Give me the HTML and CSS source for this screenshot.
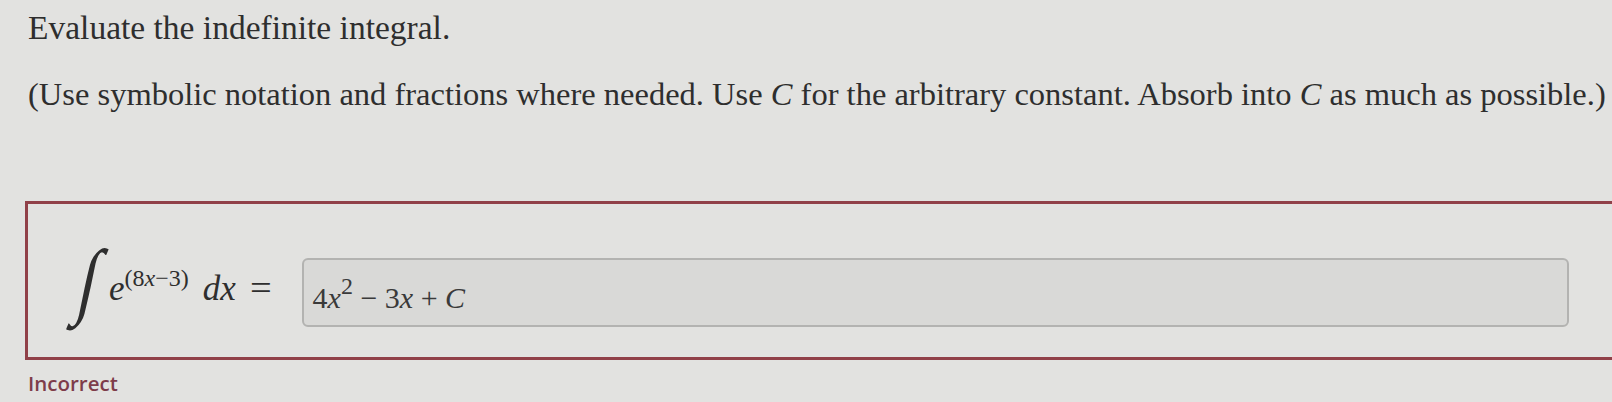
FILE: index.html
```html
<!DOCTYPE html>
<html>
<head>
<meta charset="utf-8">
<link rel="stylesheet" href="styles.css">
</head>
<body>
<div class="page">
  <p class="title">Evaluate the indefinite integral.</p>
  <p class="instr">(Use symbolic notation and fractions where needed. Use <i>C</i> for the arbitrary constant. Absorb into <i>C</i> as much as possible.)</p>
  <div class="answer-box">
    <div class="eq">
      <span class="integral">∫</span>
      <span class="math"><i>e</i><sup class="exp">(8<i>x</i>−3)</sup><i class="dx">dx</i><span class="equals">=</span></span>
      <div class="input"><span>4<i>x</i><sup class="sq">2</sup> − 3<i>x</i> + <i>C</i></span></div>
    </div>
  </div>
  <div class="status">Incorrect</div>
</div>
</body>
</html>
```
FILE: styles.css
```css
html, body {
  margin: 0;
  padding: 0;
  background: #e2e2e0;
}
.page {
  width: 1612px;
  height: 402px;
  overflow: hidden;
  padding: 8px 0 0 28px;
  box-sizing: border-box;
  font-family: "Liberation Serif", "Times New Roman", serif;
  color: #2e2e2e;
}
.title {
  margin: 0;
  font-size: 33.5px;
  line-height: 40px;
  white-space: nowrap;
}
.instr {
  margin: 24px 0 0 0;
  font-size: 32.5px;
  line-height: 44px;
  white-space: nowrap;
}
.answer-box {
  margin: 85px 0 0 -3px;
  width: 1640px;
  height: 159px;
  border: 3px solid #904048;
  border-right: none;
  box-sizing: border-box;
  padding-top: 54px;
}
.eq {
  display: flex;
  align-items: center;
  padding-left: 50px;
}
.integral {
  font-size: 84px;
  line-height: 68px;
  font-style: italic;
  display: inline-block;
  transform: translateY(-13px) skewX(-12deg) scaleX(0.8);
  margin-right: 8px;
}
.math {
  font-size: 35px;
  white-space: nowrap;
  display: inline-block;
  transform: translateY(-6px);
}
.exp {
  font-size: 24px;
  vertical-align: 14px;
  font-style: normal;
}
.dx {
  font-size: 35px;
  margin-left: 14px;
}
.equals {
  display: inline-block;
  margin-left: 15px;
  transform: scaleX(1.1);
}
.input {
  margin-left: 31px;
  width: 1267px;
  height: 69px;
  border: 2px solid #b3b3b1;
  border-radius: 6px;
  background: #d9d9d7;
  box-sizing: border-box;
  display: flex;
  align-items: center;
  padding-left: 9px;
  padding-top: 2px;
  font-size: 30px;
  color: #3a3a3a;
  white-space: nowrap;
}
.sq {
  font-size: 24px;
  vertical-align: 14px;
}
.status {
  margin-top: 9px;
  font-family: "Open Sans", sans-serif;
  font-weight: 600;
  font-size: 20.5px;
  color: #7e3c4a;
}
```
